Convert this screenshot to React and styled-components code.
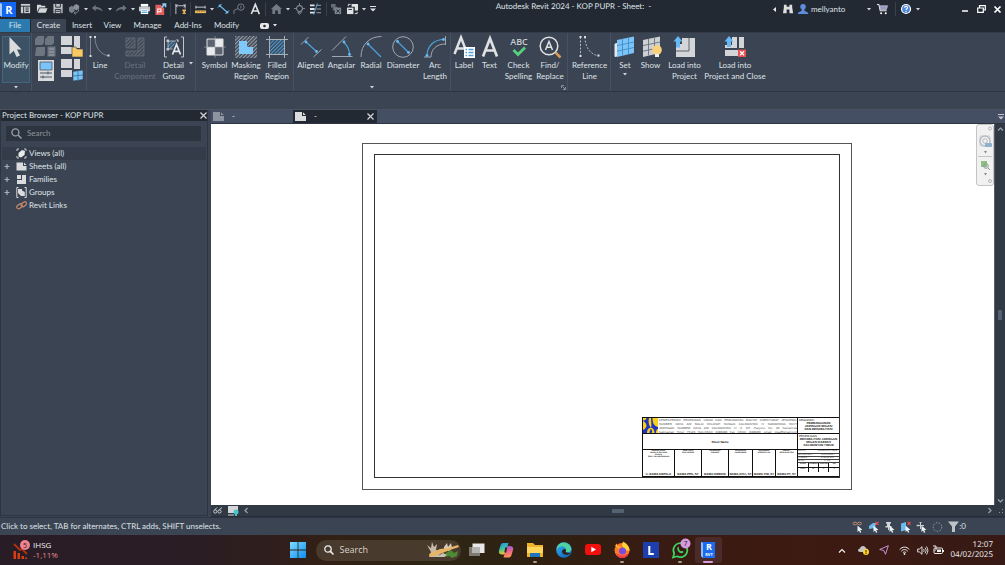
import React from "react";
import styled, { createGlobalStyle, css } from "styled-components";

const color = {
  chrome: "#222933",
  panel: "#3b4453",
  line: "#2d3542",
  text: "#dfe2e6",
  muted: "#69717e",
  tab: "#454f63",
  track: "#313945",
};

const GlobalStyle = createGlobalStyle`
  * { box-sizing: border-box; }
  body {
    margin: 0;
    background: ${color.panel};
    color: ${color.text};
    font: 8px/11px Lato, "Noto Sans", sans-serif;
    text-rendering: geometricPrecision;
  }
  button, input { font: inherit; color: inherit; }
  button { background: none; border: 0; padding: 0; }
  svg { display: block; flex: none; overflow: visible; }
`;

const Page = styled.div`
  display: flex;
  flex-direction: column;
  min-height: 100vh;
`;

/* ---------- title bar ---------- */

const TitleBar = styled.header`
  display: flex;
  height: 18px;
  background: ${color.chrome};
`;
const QuickAccess = styled.div`
  display: flex;
  align-items: center;
`;
const QuickButton = styled.button`
  display: flex;
  align-items: center;
  justify-content: center;
  width: ${(p) => p.$w || 16}px;
  height: 17px;
`;
const Divider = styled.span`
  width: 1px;
  height: 14px;
  margin: 0 2px;
  background: #39414d;
`;
const WindowTitle = styled.h1`
  flex: 1;
  margin: 0;
  padding-top: 1px;
  text-align: center;
  font-size: 8px;
  font-weight: 400;
  white-space: pre;
`;
const AccountArea = styled.div`
  display: flex;
  align-items: center;
  width: 237px;
`;
const AccountName = styled.button`
  display: flex;
  align-items: center;
  justify-content: space-between;
  width: 60px;
`;
const WindowControls = styled.div`
  display: flex;
  margin-left: auto;
`;

/* ---------- ribbon ---------- */

const TabBar = styled.nav`
  display: flex;
  height: 14px;
  padding-top: 1px;
  background: ${color.chrome};
`;
const RibbonTab = styled.button`
  width: ${(p) => p.$w}px;
  line-height: 13px;
  ${(p) => p.$file && css`background: #2a7ab0; margin-right: 1px;`}
  ${(p) => p.$active && css`background: ${color.panel};`}
`;
const TabExtra = styled.button`
  display: flex;
  align-items: center;
  gap: 4px;
  margin-left: 15px;
`;
const Ribbon = styled.section`
  display: flex;
  height: 60px;
  border-top: 1px solid #343c49;
  border-bottom: 1px solid ${color.line};
`;
const RibbonPanel = styled.div`
  display: flex;
  flex-direction: column;
  padding: 3px ${(p) => p.$end || 2}px 0 ${(p) => p.$start || 2}px;
  border-right: ${(p) => (p.$last ? 0 : 1)}px solid #485161;
`;
const ToolRow = styled.div`
  display: flex;
  height: 47px;
`;
const PanelFoot = styled.div`
  display: flex;
  align-items: center;
  justify-content: ${(p) => (p.$end ? "flex-end" : "center")};
  height: 8px;
`;
const Tool = styled.button`
  display: flex;
  flex-direction: column;
  align-items: center;
  gap: 2px;
  width: ${(p) => p.$w}px;
  white-space: pre;
  ${(p) => p.$disabled && css`color: ${color.muted};`}
  ${(p) => p.$selected && css`
    background: #3c5264;
    box-shadow: inset 0 0 0 1px #3f677f;
  `}
`;
const ToolLabel = styled.span`
  display: block;
  text-align: center;
`;
const SideCaret = styled.button`
  align-self: flex-end;
  width: 5px;
  height: 29px;
`;
const IconGrid = styled.div`
  display: grid;
  grid-template-columns: 22px 22px;
  gap: 1px 4px;
  padding: 0 1px;
`;
const OptionsBar = styled.div`
  height: 18px;
  border-bottom: 1px solid #49525f;
`;

/* ---------- work area ---------- */

const Workspace = styled.main`
  display: flex;
  flex: 1;
  min-height: 400px;
`;
const Browser = styled.aside`
  display: flex;
  flex-direction: column;
  width: 208px;
  margin-right: 3px;
  margin-bottom: 1px;
  border: solid ${color.line};
  border-width: 0 1px 1px 1px;
`;
const BrowserTitle = styled.h2`
  display: flex;
  align-items: center;
  justify-content: space-between;
  height: 11px;
  margin: 0;
  padding: 0 0 0 1px;
  background: ${color.chrome};
  font-size: 8px;
  font-weight: 400;
`;
const BrowserSearch = styled.label`
  display: flex;
  align-items: center;
  gap: 5px;
  height: 15px;
  margin: 5px 6px 6px 5px;
  padding: 0 5px;
  background: #2c343f;
`;
const TextInput = styled.input`
  flex: 1;
  min-width: 0;
  padding: 0;
  border: 0;
  outline: 0;
  background: none;
  &::placeholder { color: ${(p) => p.$hint}; opacity: 1; }
`;
const Tree = styled.ul`
  margin: 0;
  padding: 0 1px;
  list-style: none;
`;
const TreeItem = styled.li`
  display: flex;
  align-items: center;
  height: 13px;
  padding-left: 2px;
  background: ${(p) => (p.$selected ? "#343c49" : "none")};
`;
const Expander = styled.button`
  display: flex;
  width: 12px;
  height: 7px;
`;
const TreeLabel = styled.span`
  margin-left: 2px;
`;

const Viewer = styled.section`
  display: flex;
  flex: 1;
  flex-direction: column;
  min-width: 0;
`;
const DocTabs = styled.div`
  display: flex;
  height: 14px;
  background: ${color.tab};
  border-bottom: 1px solid ${color.line};
`;
const DocTab = styled.div`
  display: flex;
  align-items: center;
  gap: 8px;
  width: ${(p) => (p.$active ? 84 : 82)}px;
  padding: 0 3px 0 2px;
  background: ${(p) => (p.$active ? color.chrome : "none")};
`;
const DocName = styled.span`
  flex: 1;
`;
const DocMenu = styled.button`
  margin-left: auto;
`;
const ViewRow = styled.div`
  display: flex;
  flex: 1;
`;
const Canvas = styled.div`
  position: relative;
  display: flex;
  flex: 1;
  padding: 19px 142px 15px 151px;
  background: #fff;
`;
const Sheet = styled.div`
  display: flex;
  flex: 1;
  padding: 10px 11px 11px;
  border: 1px solid #555;
`;
const SheetFrame = styled.div`
  display: flex;
  flex: 1;
  align-items: flex-end;
  justify-content: flex-end;
  border: 1px solid #333;
`;
const NavBar = styled.div`
  position: absolute;
  top: 0;
  right: 0;
  display: flex;
  flex-direction: column;
  align-items: center;
  justify-content: space-between;
  width: 18px;
  height: 62px;
  padding: 2px 0;
  border: 1px solid #c4c4c4;
  border-radius: 3px;
  background: #f1f1f1;
`;
const NavRule = styled.span`
  width: 14px;
  height: 1px;
  background: #c4c4c4;
`;
const VScroll = styled.div`
  display: flex;
  flex-direction: column;
  align-items: center;
  justify-content: space-between;
  width: 11px;
  background: ${color.track};
  border-left: 1px solid #565e6b;
`;
const HScroll = styled.div`
  display: flex;
  align-items: center;
  height: 12px;
  background: ${color.track};
  border-bottom: 1px solid #252c36;
`;
const HTrack = styled.div`
  display: flex;
  flex: 1;
  justify-content: center;
`;
const ScrollArrow = styled.button`
  display: flex;
  align-items: center;
  justify-content: center;
  width: 10px;
  height: 10px;
`;
const Thumb = styled.span`
  width: ${(p) => (p.$vertical ? 4 : 12)}px;
  height: ${(p) => (p.$vertical ? 10 : 4)}px;
  border-radius: 1px;
  background: #566272;
`;

/* ---------- title block on the sheet ---------- */

const TitleBlock = styled.div`
  display: grid;
  grid-template-columns: 155px 41px;
  height: 60px;
  border: 1px solid #111;
  border-right: 0;
  color: #111;
  font: 3px/4px "Liberation Sans", sans-serif;
`;
const BlockMain = styled.div`
  display: grid;
  grid-template-rows: 16px 16px 1fr;
  border-right: 1px solid #111;
`;
const BlockHead = styled.div`
  display: flex;
  border-bottom: 1px solid #111;
`;
const Agency = styled.div`
  flex: 1;
  overflow: hidden;
  padding-left: 1px;
  font-size: 3px;
  color: #555;
`;
const AgencyLine = styled.div`
  height: 4px;
  text-align: justify;
  text-align-last: justify;
  white-space: nowrap;
`;
const SheetName = styled.div`
  display: flex;
  align-items: center;
  justify-content: center;
  border-bottom: 1px solid #111;
  font-size: 3px;
  font-weight: 700;
`;
const Signers = styled.div`
  display: grid;
  grid-template-columns: 31px 27px 27px 24px 23px 1fr;
`;
const Signer = styled.div`
  display: flex;
  flex-direction: column;
  justify-content: space-between;
  overflow: hidden;
  border-left: ${(p) => (p.$first ? 0 : 1)}px solid #111;
  text-align: center;
  font-size: 2px;
  font-weight: 700;
  line-height: 2px;
  white-space: pre;
`;
const SignName = styled.span`
  text-decoration: underline;
  font-size: 3px;
  line-height: 4px;
`;
const BlockSide = styled.div`
  display: grid;
  grid-template-rows: 16px 16px 1fr;
  min-width: 0;
`;
const Project = styled.div`
  overflow: hidden;
  border-bottom: 1px solid #111;
  text-align: center;
  font-weight: 700;
  line-height: 3px;
  white-space: pre;
`;
const Caption = styled.div`
  padding-left: 1px;
  text-align: left;
  font-weight: 400;
  line-height: 4px;
`;
const Meta = styled.table`
  width: 100%;
  border-collapse: collapse;
  font-size: 2px;
  line-height: 2px;
  td { padding: 0; border-bottom: 1px solid #444; white-space: nowrap; height: 3px; }
  td + td { text-align: center; }
`;
const Numbers = styled.table`
  width: 100%;
  height: 9px;
  border-collapse: collapse;
  table-layout: fixed;
  font-size: 2px;
  line-height: 3px;
  font-weight: 700;
  td { padding: 0; overflow: hidden; text-align: center; }
  td + td { border-left: 1px solid #111; }
  tr + tr td { border-top: 1px solid #111; }
`;

/* ---------- status bar and task bar ---------- */

const StatusBar = styled.div`
  display: flex;
  align-items: center;
  height: 18px;
  padding: 0 39px 0 1px;
  border-top: 1px solid ${color.line};
`;
const StatusText = styled.span`
  flex: 1;
`;
const StatusTools = styled.div`
  display: flex;
  gap: 4px;
`;
const StatusButton = styled.button`
  display: flex;
  align-items: center;
`;
const TaskBar = styled.footer`
  display: flex;
  height: 30px;
  background: linear-gradient(90deg, #281c26 0%, #2b1d24 20%, #322016 32%, #2e2614 44%, #2f2012 54%, #381b12 66%, #3d1a12 80%, #371a15 100%);
  font-family: "Open Sans", "Noto Sans", sans-serif;
  line-height: 10px;
  color: #f3f3f3;
`;
const TaskSide = styled.div`
  display: flex;
  flex: 1;
  align-items: center;
  justify-content: ${(p) => (p.$end ? "flex-end" : "flex-start")};
  padding: 0 12px;
`;
const Widget = styled.button`
  display: flex;
  align-items: center;
  gap: 4px;
  text-align: left;
`;
const Loss = styled.span`
  display: block;
  color: #e58a8f;
`;
const TaskApps = styled.div`
  display: flex;
  align-items: center;
`;
const AppButton = styled.button`
  display: flex;
  flex-direction: column;
  align-items: center;
  justify-content: flex-end;
  width: ${(p) => (p.$active ? 27 : 29)}px;
  height: 26px;
  border-radius: 3px;
  background: ${(p) => (p.$active ? "#4b2b2a" : "none")};
`;
const Indicator = styled.span`
  width: ${(p) => (p.$on === "active" ? 10 : 4)}px;
  height: 2px;
  margin-top: 2px;
  border-radius: 1px;
  background: ${(p) => (p.$on === "active" ? "#d99ae0" : p.$on ? "#a39a92" : "transparent")};
`;
const TaskSearch = styled.label`
  display: flex;
  align-items: center;
  gap: 6px;
  width: 145px;
  height: 21px;
  margin: 0 2px 0 3px;
  padding: 0 1px 0 8px;
  border-radius: 11px;
  background: #493a2e;
  font-size: 9px;
`;
const TrayButton = styled.button`
  display: flex;
  justify-content: center;
  width: ${(p) => p.$w}px;
`;
const Clock = styled.time`
  width: 46px;
  text-align: right;
`;

/* ---------- drawings ---------- */

const Svg = ({ w, h = w, children, ...rest }) => (
  <svg width={w} height={h} viewBox={`0 0 ${w} ${h}`} fill="none" aria-hidden="true" {...rest}>
    {children}
  </svg>
);
const Caret = ({ fill = "#d4d6d9", w = 4 }) => (
  <Svg w={w} h={3}><path d={`M0 0H${w}L${w / 2} 2.6Z`} fill={fill} /></Svg>
);
const Cross = ({ size = 7, stroke = "#d4d6d9", width = 1.2 }) => (
  <Svg w={size}><path d={`M.5.5 ${size - 0.5} ${size - 0.5}M${size - 0.5}.5.5 ${size - 0.5}`} stroke={stroke} strokeWidth={width} /></Svg>
);
const Lens = ({ size = 11, stroke = "#9aa1ab" }) => (
  <Svg w={size}>
    <circle cx={size * 0.4} cy={size * 0.4} r={size * 0.32} stroke={stroke} strokeWidth="1.3" />
    <path d={`M${size * 0.64} ${size * 0.64}L${size * 0.95} ${size * 0.95}`} stroke={stroke} strokeWidth="1.5" />
  </Svg>
);
const Chevron = ({ dir, stroke = "#9ca4af" }) => {
  const d = { up: "M1 4.5 3.5 2 6 4.5", down: "M1 2.5 3.5 5 6 2.5", left: "M4.5 1 2 3.5 4.5 6", right: "M2.5 1 5 3.5 2.5 6" }[dir];
  return <Svg w={7}><path d={d} stroke={stroke} strokeWidth="1.2" /></Svg>;
};
const SheetIcon = ({ fill = "#d9dbdd" }) => (
  <Svg w={11} h={9}><path d="M0 0H7V4H11V9H0Z" fill={fill} /><path d="M8 .2 10.8 3H8Z" fill={fill} /></Svg>
);

const quick = {
  home: <><path d="M2 1H12V11H2Z" fill="#c9ccd0" /><path d="M2 3.5H12M5 3.5V11M7 5.5H10.5M7 7.5H10.5M7 9.2H10.5" stroke="#222933" /></>,
  open: <><path d="M1 10V2H5L6 3H10V5H3.5Z" fill="#d4d6d9" /><path d="M4 5.8H12.5L10.5 10.5H1.8Z" fill="#d4d6d9" /></>,
  save: <><path d="M1.5 1H11.5V11H1.5Z" fill="#bfc3c8" /><path d="M4 1V4.5H9V1M3.5 11V7H9.5V11M4.5 9H8.5" stroke="#222933" strokeWidth="1" /></>,
  sync: <><path d="M1 5 4 3 7 5V9L4 11 1 9Z" fill="#7b8189" /><path d="M6 3 9 1 12 3V6L9 8 6 6Z" fill="#8b9098" /><path d="M7 11C10 11 11.5 9.5 11.5 7M8 9.5 6.5 11 8 12.5" stroke="#888e96" /></>,
  undo: <path d="M1 5.5 5 2V4.4C9 4.4 12 6 12.5 9.5 10.5 7.2 8.5 6.8 5 6.8V9Z" fill="#6d747e" />,
  redo: <path d="M12.5 5.5 8.5 2V4.4C4.5 4.4 1.5 6 1 9.5 3 7.2 5 6.8 8.500 6.800V9Z" fill="#6d747e" />,
  print: <><path d="M3 1H11V4H3Z" fill="#fff" /><path d="M1 4H13V9H1Z" fill="#c5c9cd" /><path d="M3 7H11V12H3Z" fill="#fff" /><path d="M4 8.5H10M4 10.3H10" stroke="#4aa6e0" /></>,
  pdf: <><path d="M1.500 2H8V5H11V13H1.500Z" fill="#e35d5b" /><path d="M4 6.500H7.500V9.500H4M4 6V11.500" stroke="#fff" strokeWidth="1.100" /><path d="M8 5 11.500 1.500M9 1H12.500V4.500" stroke="#8fccf4" strokeWidth="1.600" /></>,
  measure: <><path d="M2 1V12M12 1V6M2 3H12M3.5 1.5 2 3 3.5 4.5M10.5 1.5 12 3 10.5 4.5" stroke="#c9ccd0" /><path d="M9 7H13V9H12V11H13V12H9V11H10V9H9Z" fill="#eab65d" /></>,
  dim: <><path d="M2 3V6M12 3V6M2 4.5H12" stroke="#d4d6d9" /><path d="M1 8H13V11H1Z" fill="#eab65d" /><path d="M3.5 8V9.5M6 8V9.5M8.5 8V9.5M11 8V9.5" stroke="#5f4e2c" strokeWidth=".7" /></>,
  aligned: <><path d="M3 3 11 10" stroke="#6bbcf5" strokeWidth="1.2" /><path d="M1 5 5 1M9 12 13 8" stroke="#8fb8d4" /><circle cx="3" cy="3" r="1.3" fill="#6bbcf5" /><circle cx="11" cy="10" r="1.3" fill="#6bbcf5" /></>,
  tag: <><circle cx="8.5" cy="4.5" r="3.5" stroke="#7b828c" /><path d="M8.5 3V6M1 12V8L5.5 6" stroke="#7b828c" /></>,
  text: <path d="M2.5 12 6.8 1.5 11.2 12M4 8.6H9.7" stroke="#e2e3e5" strokeWidth="1.7" />,
  house: <path d="M1 6.5 7 1 13 6.5H11.5V12H8.5V8H5.5V12H2.5V6.5Z" fill="#747a83" />,
  section: <><circle cx="7" cy="6" r="3.2" stroke="#858b94" strokeWidth="1.2" /><path d="M1 6H4M10 6H13M7 0V2.5M5 10 7 12.5 9 10Z" stroke="#858b94" /></>,
  lines: <><path d="M1 2.5H6M1 6.5H6M1 10.5H6" stroke="#e2e3e5" strokeWidth="2" /><path d="M8 2.5H13M8 6.5H13M8 10.5H13" stroke="#a5abb3" /><path d="M5 12.5 9 .5" stroke="#5eb4ef" /></>,
  hidden: <><path d="M1 1H6V4H8V8H3V5H1Z" fill="#656c76" /><path d="M5 5H12V12H5Z" fill="#7d848d" /><path d="M7 7 10.5 10.5M10.5 7 7 10.5" stroke="#222933" /></>,
  switchWin: <><path d="M1 5H8V12H1Z" fill="#e2e3e5" /><path d="M6 1H13V8H9.5V4H6Z" fill="#e2e3e5" /><path d="M2.5 3.5V1.5H5M12 9.5V11.5H9.5" stroke="#e2e3e5" /><path d="M2.5 7H6.5" stroke="#222933" /></>,
  binoculars: <path d="M2 2H5V4H8V2H11V5L12 11H8V7H5V11H1L2 5Z" fill="#dcdee0" />,
  user: <><circle cx="6.5" cy="4" r="3" fill="#5f8dde" /><path d="M5 6H8V8.5L12 10.5V12H1V10.5L5 8.5Z" fill="#5f8dde" /></>,
  cart: <><path d="M1 1.5H3L4.5 8.5H11.5" stroke="#e6e6ea" strokeWidth="1.1" /><path d="M3.5 3H12.5L11.2 7H4.5Z" fill="#9a97c8" stroke="#e6e6ea" strokeWidth=".6" /><circle cx="5.5" cy="11" r="1.1" fill="#fff" /><circle cx="10.5" cy="11" r="1.1" fill="#fff" /></>,
  help: <><circle cx="6.5" cy="6.5" r="5.500" fill="#fff" /><circle cx="6.5" cy="6.5" r="4.2" fill="#4b86d8" /><path d="M4.9 5.2C5 3 8.2 3.2 8.1 5.1 8 6.3 6.5 6.2 6.5 7.7M6.5 8.8V10" stroke="#fff" strokeWidth="1.2" /></>,
};
const QuickIcon = ({ name }) => <Svg w={14} h={13} width={13} height={12}>{quick[name]}</Svg>;

const Hatch = ({ id, stroke, step = 2.6 }) => (
  <defs>
    <pattern id={id} width={step} height={step} patternUnits="userSpaceOnUse" patternTransform="rotate(45)">
      <path d={`M.6 0V${step}`} stroke={stroke} strokeWidth="1.1" />
    </pattern>
  </defs>
);
const dot = (x, y, r = 1.4) => <circle cx={x} cy={y} r={r} fill="#68baf5" />;
const gridPane = (fill, line) => (
  <><path d="M3 4 20 .5V17L3 21Z" fill={fill} /><path d="M8.5 2.8V19.5M14.5 1.6V18.3M3 9.6 20 6M3 15.2 20 11.5" stroke={line} strokeWidth=".9" /></>
);
const tools = {
  modify: <path d="M4.500 1 16.500 13.500H12L15 19.500 11.500 21 8.800 14.800 4.500 18.500Z" fill="#d9dbdd" />,
  line: <><path d="M1.5 1V21M6 1C6 11 11 18.5 20 20" stroke="#8d949e" strokeWidth=".8" /><path d="M.5 0H2.5V2H.5ZM.5 19H2.5V21H.5ZM5 0H7V2H5ZM18.5 18.5H20.5V20.5H18.5Z" fill="#d9dbdd" /></>,
  component: <><Hatch id="hComp" stroke="#646c78" /><path d="M2 2H11V12H2ZM14 2H20V20H2V15H14Z" fill="url(#hComp)" stroke="#656d79" strokeWidth=".8" /></>,
  group: <><Hatch id="hGroup" stroke="#57a4d9" /><path d="M4 1H1.5V21H4M18 1H20.5V21H18" stroke="#c3c7cc" /><path d="M5 5H14V13H5Z" fill="url(#hGroup)" stroke="#a9afb7" /><path d="M3.5 3.5H6V6H3.5ZM13 3.5H15.5V6H13ZM3.5 12H6V14.5H3.5Z" fill="#c3c7cc" /><path d="M9 19 13.5 8.5 18 19M10.5 15.5H16.5" stroke="#3b4453" strokeWidth="4" /><path d="M9.5 18.5 13.5 8.5 17.5 18.5M11 15.3H16" stroke="#e6e7e9" strokeWidth="1.7" /></>,
  symbol: <><path d="M3 3H11V11H3ZM11 11H19V19H11Z" fill="#5c6470" /><path d="M11 3H19V11H11ZM3 11H11V19H3Z" fill="#e9eaeb" /><path d="M3 3H19V19H3Z" stroke="#dfe1e3" /><path d="M11 0V22M0 11H22" stroke="#a9afb7" strokeWidth=".6" /></>,
  masking: <><Hatch id="hMask" stroke="#9ea4ad" /><path d="M0 0H22V22H0Z" fill="url(#hMask)" /><path d="M4 5H12V11H18V18H4Z" fill="#7fc8fa" /></>,
  filled: <><Hatch id="hFill" stroke="#4f9fd6" /><path d="M4 4H18V18H4Z" fill="url(#hFill)" /><path d="M3.5 0V22M18.5 0V22M0 3.5H22M0 18.5H22" stroke="#a9afb7" /></>,
  aligned: <><path d="M5.5 5.5 16.5 15.5" stroke="#4fa6e2" strokeWidth="1.1" /><path d="M1 8.5 8.5 1M13.5 21 21.5 13.5" stroke="#a0a6af" />{dot(6, 6)}{dot(16.5, 15.5)}</>,
  angular: <><path d="M1 14.5 15 .5M1 20.5H21.5" stroke="#a0a6af" /><path d="M12.5 6C17 10 18.5 14 18.5 18.5" stroke="#4fa6e2" strokeWidth="1.1" />{dot(13, 6)}{dot(18.5, 18.5)}</>,
  radial: <><path d="M1 21C1 8 10 .5 21.5 .5" stroke="#a0a6af" /><path d="M8 8 21 21" stroke="#4fa6e2" strokeWidth="1.1" />{dot(8, 8)}</>,
  diameter: <><circle cx="11" cy="11" r="10.3" stroke="#a0a6af" /><path d="M5 5 17 17" stroke="#4fa6e2" strokeWidth="1.1" />{dot(5.5, 5.5)}{dot(16.5, 16.5)}</>,
  arc: <><path d="M7 21C7 13 13 8 21 8M7 21H0M21.5 0V9" stroke="#a0a6af" /><path d="M3 20C3 10 10 3.5 20 3.5" stroke="#4fa6e2" strokeWidth="1.1" />{dot(3, 19.5)}{dot(19.5, 3.5)}</>,
  label: <><path d="M1.5 18 8 1.5 14 17M4 12.5H12" stroke="#dfe1e3" strokeWidth="2.5" /><path d="M11 11H22V22H11Z" fill="#fff" /><path d="M12.5 13.5H14M12.5 16.5H14M12.5 19.5H14M15.5 13.5H20.5M15.5 16.5H20.5M15.5 19.5H20.5" stroke="#4fa0dc" strokeWidth="1.5" /></>,
  text: <path d="M4 20.500 11 2.5 18 20.500M6.5 14.500H15.5" stroke="#dfe1e3" strokeWidth="2.700" />,
  spell: <><text x="11" y="8.5" textAnchor="middle" fontSize="9" fontWeight="600" fontFamily="Open Sans" fill="#c9ccd0">ABC</text><path d="M5.5 14 10 18.5 17 11.5" stroke="#57cf7f" strokeWidth="2.8" /></>,
  find: <><circle cx="10" cy="10" r="8.8" stroke="#dfe1e3" strokeWidth="1.5" /><path d="M6.5 14 10 5.5 13.5 14M7.8 11.3H12.2" stroke="#dfe1e3" strokeWidth="1.5" /><path d="M16.5 16.5 21.5 21.5" stroke="#d99a56" strokeWidth="2.5" /></>,
  refline: <><path d="M1.5 1V21M6 1C6 11 11 18.5 20 20" stroke="#b6bac1" strokeWidth="1" strokeDasharray="2 1.5" /><path d="M.5 0H2.5V2H.5ZM.5 19H2.5V21H.5ZM5 0H7V2H5ZM18.5 18.5H20.5V20.5H18.5Z" fill="#d9dbdd" /></>,
  set: <><path d="M1 8 3 7.5V20L1 20.5Z" fill="#e6e7e9" stroke="#e6e7e9" />{gridPane("#7cc4f8", "#3f8ec8")}</>,
  show: <>{gridPane("#cdd0d3", "#69717d")}<circle cx="17" cy="14" r="4.8" fill="#fad27b" /><path d="M15 18H19V21H15Z" fill="#eee" /></>,
  load: <><path d="M2 8H8V2H21V21H2Z" fill="#d3d5d8" /><path d="M15 2V15H2" stroke="#5a626e" /><path d="M4 0 8.500 5.500H6V11.500H2V5.500H-.5Z" fill="#65b9f5" /></>,
  loadClose: <><path d="M8 1H13V12H1V9H8ZM15 1H20V12H15ZM1 14H14V20H1Z" fill="#d3d5d8" /><path d="M5 0 9.5 5.5H7V11H3V5.5H.5Z" fill="#65b9f5" /><path d="M14 13.500H22V21H14Z" fill="#e5514f" /><path d="M16 15.300 20 19.300M20 15.300 16 19.300" stroke="#fff" strokeWidth="1.3" /></>,
  family: <><path d="M1 2 3 0H9V7L7 9H0V3ZM11 2 13 0H19V7L17 9H10V3ZM1 12 2 11H10V18L9 20H0Z" fill="#6d7580" /><path d="M12 10H21V21H12Z" fill="#6d7580" stroke="#3b4453" /><path d="M14 13H19M14 16H19M14 19H19" stroke="#a9afb7" strokeWidth=".8" /></>,
  layout: <><path d="M0 0H11V9H0ZM13 0H19V12H13ZM0 11H11V18H0Z" fill="#d3d5d8" /><path d="M11 11H15L16 13H22V21H11Z" fill="#f8c861" stroke="#3b4453" strokeWidth=".6" /></>,
  properties: <><path d="M3 1H19V22H3Z" fill="#d9dbdd" /><path d="M5 3H17V11H5Z" fill="#7cc4f8" stroke="#4b5562" strokeWidth=".8" /><path d="M5 14H17M5 18H17M13 12.5V15.5M8 16.5V19.5" stroke="#4b5562" /></>,
  types: <><path d="M0 0H11V9H0ZM13 0H19V10H13ZM0 11H11V18H0Z" fill="#d3d5d8" /><path d="M12 12.5 22 11V20.5L12 22Z" fill="#7cc4f8" stroke="#3b4453" strokeWidth=".6" /><path d="M17 11V22M12 17 22 16" stroke="#2f6f9e" strokeWidth=".8" /></>,
};
const ToolIcon = ({ name }) => <Svg w={22}>{tools[name]}</Svg>;

const treeIcons = {
  views: <><path d="M1 3V1H3M8 1H10V3M1 8V10H3M8 10H10V8" stroke="#c9ccd0" /><path d="M2.500 5 6 2 9 3 8.500 7 5 9.500 2.500 8.500Z" fill="#e9eaeb" /></>,
  sheets: <><path d="M.5 1.5H7V5H10.5V9.5H.5Z" fill="#d9dbdd" /><path d="M8 1.5 10.5 4H8Z" fill="#d9dbdd" /></>,
  families: <path d="M1 1H5V5H1ZM6 1H10V10H1V6H6Z" fill="#d9dbdd" />,
  groups: <><path d="M2.5.5H.8V10.5H2.5M8.5.5H10.2V10.5H8.5" stroke="#d9dbdd" /><path d="M2 2H6V3.500L8.800 5V9H5L2 6Z" fill="#d9dbdd" /></>,
  links: <><rect x="0.5" y="4.5" width="6" height="3.6" rx="1.8" stroke="#c98a68" strokeWidth="1.2" transform="rotate(-35 3.5 6.3)" /><rect x="4.8" y="2.5" width="6" height="3.6" rx="1.8" stroke="#c98a68" strokeWidth="1.2" transform="rotate(-35 7.8 4.3)" /></>,
};

const pointer = <path d="M5.5 4.5 10.5 9H8.3L9.3 11.3 8 11.8 7 9.5 5.5 11Z" fill="#f0f1f2" />;
const redX = <path d="M7.5.8 10.5 3.8M10.5.8 7.5 3.8" stroke="#e8504c" strokeWidth="1.2" />;
const statusIcons = [
  ["Select links", <><ellipse cx="3" cy="2.5" rx="2" ry="1.300" stroke="#c08a72" /><ellipse cx="7.5" cy="2.5" rx="2" ry="1.300" stroke="#c08a72" />{pointer}</>],
  ["Select underlay elements", <><path d="M1 5 5 2H8L7 7 1 8Z" fill="#6cb9ee" />{pointer}{redX}</>],
  ["Select pinned elements", <><path d="M2 1H7V2.5H6V5H7.5V6.5H1.5V5H3V2.5H2ZM4 6.5H5V9H4Z" fill="#d4d6d9" />{pointer}</>],
  ["Select elements by face", <><path d="M1 2.5 6 1V9L1 10.5Z" fill="#6cb9ee" />{pointer}{redX}</>],
  ["Drag elements on selection", <><path d="M4.5 1V8M1 4.5H8M3.5 2 4.5 1 5.5 2M2 3.5 1 4.5 2 5.5" stroke="#c9ccd0" />{pointer}</>],
  ["Background processes", <circle cx="5.5" cy="6" r="4.3" stroke="#9aa1ab" strokeDasharray="1.5 1.5" />],
];

const appIcons = {
  start: <><defs><linearGradient id="win" x2="1" y2="1"><stop stopColor="#7ddcff" /><stop offset="1" stopColor="#0d8ef0" /></linearGradient></defs><path d="M0 1H7.6V8.6H0ZM8.4 1H16V8.6H8.4ZM0 9.4H7.6V17H0ZM8.4 9.4H16V17H8.4Z" fill="url(#win)" /></>,
  tasks: <><path d="M0 6H11V15H0Z" fill="#7d7872" /><path d="M3.500 2.500H15.500V12H3.500Z" fill="#e8e8e8" /><path d="M3.500 6H11V12H3.500Z" fill="#b5b3b0" /></>,
  copilot: (
    <>
      <defs>
        <linearGradient id="copL" x2=".3" y2="1"><stop stopColor="#2f86ee" /><stop offset=".55" stopColor="#36c3a0" /><stop offset="1" stopColor="#f3c42f" /></linearGradient>
        <linearGradient id="copR" x2=".2" y2="1"><stop stopColor="#8a5cf0" /><stop offset=".5" stopColor="#e8609a" /><stop offset="1" stopColor="#ff9350" /></linearGradient>
      </defs>
      <path d="M5 2H10.500L7.500 12C7 13.500 6 13.500 4.500 13.500 1.500 13.500.3 12 1 9.500L2.500 4.500C3 3 3.700 2 5 2Z" fill="url(#copL)" />
      <path d="M11.500 5C14.500 5 15.700 6.500 15 9L13.500 14C13 15.500 12.300 16.500 11 16.500H5.500L8.500 6.500C9 5 10 5 11.500 5Z" fill="url(#copR)" />
      <path d="M7.200 6.500H9.300L8.200 11.500H6.300Z" fill="#2e2614" />
    </>
  ),
  explorer: <><path d="M0 2H6L8 4H16V16H0Z" fill="#f0b429" /><path d="M0 6H16V12H0Z" fill="#ffd65c" /><path d="M3 12H13V16H3Z" fill="#1c75bf" /></>,
  edge: <><defs><linearGradient id="edg" x2="1" y2="1"><stop stopColor="#38b7ee" /><stop offset=".5" stopColor="#1d86d8" /><stop offset="1" stopColor="#1157a5" /></linearGradient></defs><circle cx="8" cy="9" r="7.8" fill="url(#edg)" /><path d="M1 6C3 1 9 0 13 3.5 16.5 7 16 11 11.5 11.5 9.5 11.5 9 11 10 9.5 10.5 7 8 5.5 5.5 5.5 3.5 5.5 2 6.5.5 8.5Z" fill="#4fd1a0" /><path d="M10 9.5C9 11 10 12 14.5 12 12 15 6 14 6 10.5 6.5 7.5 10 7 10 9.5Z" fill="#2b2114" /></>,
  youtube: <><rect x="0" y="3" width="16" height="11" rx="3" fill="#f40f0f" /><path d="M6.3 5.8 11 8.5 6.3 11.2Z" fill="#fff" /></>,
  firefox: <><circle cx="8" cy="9.5" r="7.5" fill="#ff7a24" /><path d="M9 .5C12 2 15.5 5 15.5 10L10 8.5 8 4Z" fill="#ffd23a" /><path d="M1 5 2.5 2.5 4 5 7 5.5 5 8Z" fill="#ffb02e" /><circle cx="8.5" cy="10" r="3.500" fill="#7b4be0" /><path d="M2 12C5 15 11 16 15 11.5 14 15.5 11 17 8 17 5 17 3 15 2 12Z" fill="#f2384f" /></>,
  letter: <><path d="M0 1H16V17H0Z" fill="#1d3fae" /><path d="M6.3 5V13H10.8" stroke="#fff" strokeWidth="2" /></>,
  whatsapp: <><path d="M1 16.5 2.2 12.5A7 7 0 1 1 5 15.3Z" stroke="#3bd463" strokeWidth="1.7" /><path d="M5.5 6.5C6 5.5 7 6 7 7.5 6.5 8.5 8.5 10.7 9.8 10.2 11 9.5 12 11 11 11.8 8 13.5 4.5 9.5 5.5 6.5Z" fill="#3bd463" /><circle cx="13.5" cy="2.5" r="5" fill="#d79ae0" /><text x="13.5" y="5" fontSize="7" textAnchor="middle" fill="#2b1d24">7</text></>,
  revit: <><path d="M1 1H15V17H3L1 15Z" fill="#1a6bf0" /><path d="M1 1 3 2V17L1 15Z" fill="#8ebcff" /><text x="9" y="9" fontSize="9" fontWeight="700" textAnchor="middle" fill="#fff">R</text><text x="9" y="14.5" fontSize="4" fontWeight="700" textAnchor="middle" fill="#fff">RVT</text></>,
};

const Logo = () => (
  <Svg w={16} h={17}>
    <path d="M0 1H16V16H3L0 15Z" fill="#1266f1" /><path d="M0 2 2 3V16L0 14.5Z" fill="#a7cbff" />
    <text x="9" y="12.5" fontSize="11" fontWeight="700" textAnchor="middle" fontFamily="Open Sans" fill="#fff">R</text>
  </Svg>
);

const quickItems = [
  ["home", "Home", 18], ["open", "Open", 16], ["save", "Save", 16], ["sync", "Synchronize", 16], "caret",
  ["undo", "Undo", 17], "caret", ["redo", "Redo", 16], "caret", ["print", "Print", 16], ["pdf", "Export PDF", 16], "divider",
  ["measure", "Measure", 15], "divider", ["dim", "Dimension", 15], "caret", ["aligned", "Aligned dimension", 16], ["tag", "Tag", 16], ["text", "Text", 16], "divider",
  ["house", "3D view", 16], "caret", ["section", "Section", 16], ["lines", "Thin lines", 17], "divider", ["hidden", "Close inactive", 15],
  ["switchWin", "Switch windows", 16], "caret",
];

const panels = [
  { tools: [["line", "Line", 24], ["component", "Detail\nComponent", 46, "disabled"], ["group", "Detail\nGroup", 31]], caret: true, start: 1, end: 1 },
  { tools: [["symbol", "Symbol", 31], ["masking", "Masking\nRegion", 32], ["filled", "Filled\nRegion", 30]], start: 3, end: 1 },
  { tools: [["aligned", "Aligned", 29], ["angular", "Angular", 33], ["radial", "Radial", 26], ["diameter", "Diameter", 38], ["arc", "Arc\nLength", 26]], foot: "caret", end: 2 },
  { tools: [["label", "Label", 24], ["text", "Text", 27], ["spell", "Check\nSpelling", 31], ["find", "Find/\nReplace", 32]], foot: "launcher", start: 1, end: 1 },
  { tools: [["refline", "Reference\nLine", 39]], end: 1 },
  { tools: [["set", "Set", 24], ["show", "Show", 27], ["load", "Load into\nProject", 41], ["loadClose", "Load into\nProject and Close", 60]], last: true },
];

const tree = [
  ["views", "Views (all)", false], ["sheets", "Sheets (all)", true], ["families", "Families", true],
  ["groups", "Groups", true], ["links", "Revit Links", false],
];

const agency = [
  "KEMENTERIAN PEKERJAAN UMUM DAN PERUMAHAN RAKYAT DIREKTORAT JENDERAL",
  "SUMBER DAYA AIR BALAI WILAYAH SUNGAI KALIMANTAN IV SAMARINDA SNVT",
  "JARINGAN SUMBER DAYA AIR KALIMANTAN IV Jl. MT. Haryono No. 36 Samarinda",
  "Kalimantan Timur 75123 Telp.(0541) 2088088 Fax (0541) 2088086, email: pjsa@gmail.com",
];
const signers = [
  ["MENGETAHUI\nKEPALA SATUAN\nKERJA\nSNVT PELAKSANAAN", "Ir. NAMA KEPALA"], ["DISETUJUI\nPPK IRIGASI", "NAMA PPK, ST"], ["DIPERIKSA\nDIREKSI", "NAMA DIREKSI"],
  ["DIPERIKSA\nPENGAWAS", "NAMA AHLI, ST"], ["DIGAMBAR\nKONSULTAN", "NAMA TIM, ST"], ["DIBUAT\nKONTRAKTOR", "NAMA PT, ST"],
];

const SheetTitleBlock = () => (
  <TitleBlock>
    <BlockMain>
      <BlockHead>
        <Svg w={15}>
          <path d="M0 0H15V15H0Z" fill="#f7d117" />
          <path d="M0 3C2.500 4 3.500 6 3.500 8 3 10 1.500 11.500 0 12V15H4C4 12 5 10 8 9.500 6 8 5 4 6 0H3.500C3 2 1.500 2.500 0 2.500ZM8 0H9.500C9.500 4 10.500 8 15 9V11C13.500 11 13 13 13 15H11.500C11.500 12 10 10 8 9.500 9 7 8 4 8 0ZM8 11C9.500 12 9.500 14 8.500 15H6.500C6.500 13 7 12 8 11Z" fill="#2233c4" />
        </Svg>
        <Agency>{agency.map((t) => <AgencyLine key={t}>{t}</AgencyLine>)}</Agency>
      </BlockHead>
      <SheetName>Sheet Name</SheetName>
      <Signers>
        {signers.map(([role, name], i) => (
          <Signer key={role} $first={i === 0}><span>{role}</span><SignName>{name}</SignName></Signer>
        ))}
      </Signers>
    </BlockMain>
    <BlockSide>
      <Project><Caption>KEGIATAN :</Caption>{"PEMBANGUNAN\nJARINGAN IRIGASI\nDAN REHABILITASI"}</Project>
      <Project><Caption>PEKERJAAN :</Caption>{"REHABILITASI JARINGAN\nIRIGASI DAERAH\nKALIMANTAN TIMUR"}</Project>
      <div>
        <Meta><tbody>
          {[["LOKASI :", "KALIMANTAN TIMUR"], ["NO. KONTRAK :", "HK.02.03/2025"], ["TANGGAL :", "JANUARI 2025"], ["SKALA :", "1 : 100"]].map(([k, v]) => (
            <tr key={k}><td>{k}</td><td>{v}</td></tr>
          ))}
        </tbody></Meta>
        <Numbers><tbody>
          <tr><td>KODE</td><td>LEMBAR</td><td>JUMLAH</td><td>NO</td></tr>
          <tr><td>A101</td><td>01</td><td>1</td><td>1</td></tr>
        </tbody></Numbers>
      </div>
    </BlockSide>
  </TitleBlock>
);

const App = () => (
  <Page>
    <GlobalStyle />
    <TitleBar>
      <QuickAccess>
        <QuickButton aria-label="Revit"><Logo /></QuickButton>
        {quickItems.map((item, i) => {
          if (item === "divider") return <Divider key={i} />;
          if (item === "caret") return <QuickButton key={i} $w={7} aria-label="More"><Caret /></QuickButton>;
          const [name, label, w] = item;
          return <QuickButton key={i} $w={w} aria-label={label}><QuickIcon name={name} /></QuickButton>;
        })}
        <QuickButton $w={12} aria-label="Customize">
          <Svg w={6}><path d="M0 .5H6" stroke="#dfe2e6" /><path d="M0 2.5H6L3 5.5Z" fill="#dfe2e6" /></Svg>
        </QuickButton>
      </QuickAccess>
      <WindowTitle>{"Autodesk Revit 2024 - KOP PUPR - Sheet:  -"}</WindowTitle>
      <AccountArea>
        <QuickButton $w={13} aria-label="Collapse"><Svg w={3} h={5}><path d="M3 0V5L0 2.5Z" fill="#e8e8e8" /></Svg></QuickButton>
        <QuickButton $w={14} aria-label="Find"><QuickIcon name="binoculars" /></QuickButton>
        <QuickButton aria-label="Account"><QuickIcon name="user" /></QuickButton>
        <AccountName>mellyanto<Caret /></AccountName>
        <QuickButton $w={22} aria-label="App store"><QuickIcon name="cart" /></QuickButton>
        <Divider />
        <QuickButton aria-label="Help"><QuickIcon name="help" /></QuickButton>
        <QuickButton $w={7} aria-label="Help options"><Caret /></QuickButton>
        <WindowControls>
          <QuickButton aria-label="Minimize"><Svg w={6}><path d="M0 5H6" stroke="#fff" strokeWidth="1.5" /></Svg></QuickButton>
          <QuickButton aria-label="Restore"><Svg w={9} h={8}><path d="M2.5 2.5V.7H8.3V5H6.5M.7 3H6.3V7.3H.7Z" stroke="#fff" strokeWidth="1.2" /></Svg></QuickButton>
          <QuickButton aria-label="Close"><Cross stroke="#fff" width={1.7} /></QuickButton>
        </WindowControls>
      </AccountArea>
    </TitleBar>

    <TabBar>
      <RibbonTab $w={30} $file>File</RibbonTab>
      <RibbonTab $w={35} $active>Create</RibbonTab>
      <RibbonTab $w={32}>Insert</RibbonTab>
      <RibbonTab $w={29}>View</RibbonTab>
      <RibbonTab $w={41}>Manage</RibbonTab>
      <RibbonTab $w={40}>Add-Ins</RibbonTab>
      <RibbonTab $w={37}>Modify</RibbonTab>
      <TabExtra aria-label="Ribbon display">
        <Svg w={9} h={6}><rect width="9" height="6" rx="2" fill="#e8e8e8" /><circle cx="4.5" cy="3" r="1.3" fill="#222933" /></Svg>
        <Caret fill="#e8e8e8" />
      </TabExtra>
    </TabBar>

    <Ribbon>
      <RibbonPanel $end={1}>
        <ToolRow><Tool $w={28} $selected><ToolIcon name="modify" /><ToolLabel>Modify</ToolLabel></Tool></ToolRow>
        <PanelFoot><Caret /></PanelFoot>
      </RibbonPanel>
      <RibbonPanel>
        <IconGrid>
          {["family", "layout", "properties", "types"].map((n) => <button key={n} aria-label={n}><ToolIcon name={n} /></button>)}
        </IconGrid>
      </RibbonPanel>
      {panels.map((panel, i) => (
        <RibbonPanel key={i} $start={panel.start} $end={panel.end} $last={panel.last}>
          <ToolRow>
            {panel.tools.map(([name, label, w, state]) => (
              <Tool key={name} $w={w} $disabled={state}>
                <ToolIcon name={name} />
                <ToolLabel>{label}</ToolLabel>
                {name === "set" && <Caret />}
              </Tool>
            ))}
            {panel.caret && <SideCaret aria-label="Group options"><Svg w={4} h={14}><path d="M0 0H4L2 2.5Z" fill="#d4d6d9" /></Svg></SideCaret>}
          </ToolRow>
          <PanelFoot $end={panel.foot === "launcher"}>
            {panel.foot === "caret" && <Caret />}
            {panel.foot === "launcher" && <Svg w={5}><path d="M.5 3V.5H3M1.5 1.5 4 4M4.5 2V4.5H2" stroke="#9aa1ab" strokeWidth=".8" /></Svg>}
          </PanelFoot>
        </RibbonPanel>
      ))}
    </Ribbon>
    <OptionsBar />

    <Workspace>
      <Browser>
        <BrowserTitle>Project Browser - KOP PUPR<button aria-label="Close browser"><Cross /></button></BrowserTitle>
        <BrowserSearch>
          <Lens />
          <TextInput type="text" aria-label="Search the project" placeholder="Search" $hint="#8d949e" />
        </BrowserSearch>
        <Tree>
          {tree.map(([icon, label, open], i) => (
            <TreeItem key={icon} $selected={i === 0}>
              <Expander as={open ? "button" : "span"} aria-label={open ? `Expand ${label}` : undefined}>
                {open && <Svg w={6} h={7}><path d="M3 1V6M.5 3.5H5.5" stroke="#aab0b8" strokeWidth="1.2" /></Svg>}
              </Expander>
              <Svg w={11}>{treeIcons[icon]}</Svg>
              <TreeLabel>{label}</TreeLabel>
            </TreeItem>
          ))}
        </Tree>
      </Browser>

      <Viewer>
        <DocTabs>
          <DocTab><SheetIcon fill="#8d949f" /><DocName>-</DocName></DocTab>
          <DocTab $active><SheetIcon /><DocName>-</DocName><button aria-label="Close view"><Cross /></button></DocTab>
          <DocMenu aria-label="View list"><Svg w={7}><path d="M0 1.5H6" stroke="#c3c7cc" /><path d="M0 3.5H6L3 6.5Z" fill="#c3c7cc" /></Svg></DocMenu>
        </DocTabs>
        <ViewRow>
          <Canvas>
            <Sheet><SheetFrame><SheetTitleBlock /></SheetFrame></Sheet>
            <NavBar>
              <Svg w={14} h={4}><circle cx="12" cy="1.5" r="1.5" stroke="#aaa" strokeWidth=".8" /></Svg>
              <Svg w={14}><path d="M2 2H12V12H2Z" stroke="#c9cdd1" strokeWidth=".8" /><circle cx="7" cy="7" r="5" stroke="#b5bbc2" strokeWidth="1.3" /><circle cx="7" cy="7" r="2.3" stroke="#b5bbc2" /><rect x="7" y="9" width="7" height="4" rx="1" fill="#8fb0cf" /></Svg>
              <Caret fill="#888" w={3} />
              <NavRule />
              <Svg w={10}><path d="M1 1H7V7H1Z" fill="#8fbf80" /><circle cx="6" cy="6" r="2.3" stroke="#8e979e" /><path d="M8 8 10 10" stroke="#8e979e" /></Svg>
              <Caret fill="#888" w={3} />
              <Svg w={14} h={4}><circle cx="12" cy="2" r="1.5" stroke="#aaa" strokeWidth=".8" /></Svg>
            </NavBar>
          </Canvas>
          <VScroll>
            <ScrollArrow aria-label="Scroll up"><Chevron dir="up" /></ScrollArrow>
            <Thumb $vertical />
            <ScrollArrow aria-label="Scroll down"><Chevron dir="down" /></ScrollArrow>
          </VScroll>
        </ViewRow>
        <HScroll>
          <QuickButton $w={14} aria-label="Temporary hide"><Svg w={10} h={7}><circle cx="2.3" cy="4.5" r="1.6" stroke="#c9ccd0" /><circle cx="6.5" cy="4.5" r="1.6" stroke="#c9ccd0" /><path d="M1.5 3 4 .5M6 3 9 .5" stroke="#c9ccd0" /></Svg></QuickButton>
          <QuickButton aria-label="Reveal hidden"><Svg w={11} h={10}><path d="M0 0H10V7H0Z" fill="#d4d6d9" /><path d="M0 9H6" stroke="#d4d6d9" /><circle cx="8" cy="6" r="2.5" fill="#48c4cf" /><path d="M7 8H9V10H7Z" fill="#48c4cf" /></Svg></QuickButton>
          <ScrollArrow aria-label="Scroll left"><Chevron dir="left" /></ScrollArrow>
          <HTrack><Thumb /></HTrack>
          <ScrollArrow aria-label="Scroll right"><Chevron dir="right" /></ScrollArrow>
          <Svg w={11} h={8}><path d="M8 2H9V3H8ZM8 5H9V6H8ZM5 5H6V6H5Z" fill="#8d949e" /></Svg>
        </HScroll>
      </Viewer>
    </Workspace>

    <StatusBar>
      <StatusText>Click to select, TAB for alternates, CTRL adds, SHIFT unselects.</StatusText>
      <StatusTools>
        {statusIcons.map(([label, art]) => <StatusButton key={label} aria-label={label}><Svg w={12}>{art}</Svg></StatusButton>)}
        <StatusButton aria-label="Filter"><Svg w={11}><path d="M0 .5H11L7 5.5V11H4V5.5Z" fill="#bfc3c8" /></Svg>:0</StatusButton>
      </StatusTools>
    </StatusBar>

    <TaskBar>
      <TaskSide>
        <Widget>
          <Svg w={17} h={20}>
            <path d="M2 4 8 10 10 9 15 14" stroke="#b23211" strokeWidth="1.8" />
            <path d="M1.5 11H4V19H1.5ZM5.5 13H8V19H5.5ZM9.5 16H12V19H9.5ZM13 17.5H15V19H13Z" fill="#d63d10" />
            <circle cx="13" cy="5" r="5" fill="#f0828e" /><text x="13" y="7.8" fontSize="7" textAnchor="middle" fill="#2b1d24">5</text>
          </Svg>
          <span>IHSG<Loss>-1,11%</Loss></span>
        </Widget>
      </TaskSide>
      <TaskApps>
        <AppButton aria-label="Start"><Svg w={16} h={18}>{appIcons.start}</Svg><Indicator /></AppButton>
        <TaskSearch>
          <Lens size={10} stroke="#ececec" />
          <TextInput type="text" aria-label="Search" placeholder="Search" $hint="#d8d3cd" />
          <Svg w={34} h={18}>
            <path d="M1 4 5 7 6 1 8 6 11 3 10 9 15 11 12 16H3L5 11Z" fill="#c9b9a6" />
            <path d="M18 6 21 2 22 6 25 2 26 7 23 10 18 9Z" fill="#d8cbbb" />
            <path d="M3 13 14 8 22 7 32 4 33 6 24 9 14 13 4 16Z" fill="#e6b566" />
            <path d="M20 12 25 9 28 12 32 10 31 15 26 17 23 15 18 16Z" fill="#4d8a34" />
            <path d="M12 15 17 12 21 14 18 16H12Z" fill="#c9c3b4" />
          </Svg>
        </TaskSearch>
        {[["tasks"], ["copilot"], ["explorer", 1], ["edge"], ["youtube"], ["firefox", 1], ["letter"], ["whatsapp", 1], ["revit", "active"]].map(([name, on]) => (
          <AppButton key={name} aria-label={name} $active={on === "active"}>
            <Svg w={16} h={18}>{appIcons[name]}</Svg><Indicator $on={on} />
          </AppButton>
        ))}
      </TaskApps>
      <TaskSide $end>
        <TrayButton $w={20} aria-label="Hidden icons"><Svg w={8} h={5}><path d="M1 4.5 4 1.5 7 4.5" stroke="#f3f3f3" strokeWidth="1.1" /></Svg></TrayButton>
        <TrayButton $w={22} aria-label="OneDrive"><Svg w={11} h={10}><path d="M2 7C-.5 7-.5 3.5 2 3.5 3 0 7.5.5 8 3.5 11 3.5 10.5 7 9 7Z" fill="#c5c5c5" /><circle cx="8" cy="7" r="3" fill="#ffd42a" /><path d="M8 5V7.5M8 8V9" stroke="#332200" /></Svg></TrayButton>
        <TrayButton $w={20} aria-label="Location"><Svg w={10}><path d="M9.3.7 6.5 9.3 4.8 5.5.7 4.5Z" stroke="#c793d6" /></Svg></TrayButton>
        <TrayButton $w={21} aria-label="Wi-Fi"><Svg w={11} h={9}><path d="M.7 3.5C3.5.3 7.5.3 10.3 3.5M2.3 5.2C4.3 3 6.7 3 8.7 5.2M3.9 6.8C5 5.7 6 5.7 7.1 6.8" stroke="#eee" /><circle cx="5.5" cy="8" r=".9" fill="#eee" /></Svg></TrayButton>
        <TrayButton $w={14} aria-label="Volume"><Svg w={11} h={9}><path d="M.7 3V6H2.5L5 8.3V.7L2.5 3ZM6.5 3C7.3 4 7.3 5 6.5 6M8 1.7C9.5 3.5 9.5 5.5 8 7.3M9.5.5C11.3 3 11.3 6 9.5 8.5" stroke="#eee" strokeWidth=".9" /></Svg></TrayButton>
        <TrayButton $w={18} aria-label="Battery"><Svg w={11} h={9}><rect x="1" y="2" width="8.5" height="5.5" rx="1" stroke="#eee" /><path d="M4 3.5H8V6H4Z" fill="#eee" /><path d="M10.5 4V6" stroke="#eee" /><path d="M0 0H3V3.5L1.5 5" stroke="#eee" /></Svg></TrayButton>
        <Clock>12:07<br />04/02/2025</Clock>
      </TaskSide>
    </TaskBar>
  </Page>
);

export default App;
